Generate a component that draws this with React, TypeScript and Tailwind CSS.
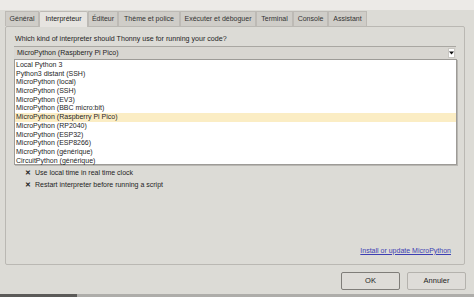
import React from "react";

const tabs = [
  { label: "Général", w: "w-[34px]" },
  { label: "Interpréteur", w: "w-[49px]", active: true },
  { label: "Éditeur", w: "w-[30px]" },
  { label: "Thème et police", w: "w-[62px]" },
  { label: "Exécuter et déboguer", w: "w-[76px]" },
  { label: "Terminal", w: "w-[37px]" },
  { label: "Console", w: "w-[35px]" },
  { label: "Assistant", w: "w-[39px]" },
];

const interpreters = [
  "Local Python 3",
  "Python3 distant (SSH)",
  "MicroPython (local)",
  "MicroPython (SSH)",
  "MicroPython (EV3)",
  "MicroPython (BBC micro:bit)",
  "MicroPython (Raspberry Pi Pico)",
  "MicroPython (RP2040)",
  "MicroPython (ESP32)",
  "MicroPython (ESP8266)",
  "MicroPython (générique)",
  "CircuitPython (générique)",
];

const selected = "MicroPython (Raspberry Pi Pico)";

export default function App() {
  return (
    <div
      className="w-[474px] h-[297px] flex flex-col bg-[#dcdbd6] text-[#1e1e1e] overflow-hidden"
      style={{ fontFamily: '"Liberation Sans", Arial, sans-serif' }}
    >
      {/* top strip of the window */}
      <div className="h-[10px] bg-[#eceae7]" />

      {/* tabs */}
      <div className="flex items-end h-[16px] px-[5px]">
        {tabs.map((t) =>
          t.active ? (
            <div
              key={t.label}
              className={`${t.w} h-[16px] flex items-center justify-center text-[7px] bg-[#e6e4e0] border border-b-0 border-[#bdbab5] rounded-t-[2px] relative top-px`}
            >
              {t.label}
            </div>
          ) : (
            <div
              key={t.label}
              className={`${t.w} h-[15px] flex items-center justify-center text-[7px] text-[#333] bg-[#cfcdc8] border-l border-t border-r border-[#bdbab5]`}
            >
              {t.label}
            </div>
          )
        )}
      </div>

      {/* panel */}
      <div className="ml-[5px] mr-[9px] h-[239px] border border-[#bab8b3] rounded-[2px] bg-[#dcdbd6] flex flex-col px-[8px] pt-[7px]">
        <div className="text-[7.1px] leading-[10px] pl-px">
          Which kind of interpreter should Thonny use for running your code?
        </div>

        {/* combobox */}
        <div className="mt-[2px] h-[13px] flex items-center border-t border-[#a9a7a2] bg-[#d8d6d1] pl-[3px] pr-px">
          <span className="text-[7px] flex-1">MicroPython (Raspberry Pi Pico)</span>
          <div className="w-[7px] h-[10px] bg-white border border-[#c9c7c2] flex items-center justify-center">
            <svg width="5" height="4" viewBox="0 0 5 4">
              <path d="M0 0.5 L5 0.5 L2.5 3.5 Z" fill="#111" />
            </svg>
          </div>
        </div>

        {/* open list */}
        <div className="w-[443px] h-[106px] bg-white border border-[#9d9b97] flex flex-col pt-px shadow-[1px_1px_0_#b9b7b2]">
          {interpreters.map((name) => (
            <div
              key={name}
              className={`h-[8.7px] leading-[8.7px] text-[7px] pl-px ${
                name === selected ? "bg-[#fbedc4]" : ""
              }`}
            >
              {name}
            </div>
          ))}
        </div>

        {/* checkboxes */}
        <div className="mt-[4px] pl-[11px] flex flex-col gap-[3px]">
          <div className="flex items-center gap-[4px] h-[9px] text-[7px]">
            <span className="text-[7px] font-bold">✕</span>
            <span>Use local time in real time clock</span>
          </div>
          <div className="flex items-center gap-[4px] h-[9px] text-[7px]">
            <span className="text-[7px] font-bold">✕</span>
            <span>Restart interpreter before running a script</span>
          </div>
        </div>

        <div className="flex-1" />

        <div className="flex justify-end pr-[5px] pb-[8px]">
          <span className="text-[7px] text-[#3d3fb3] underline">Install or update MicroPython</span>
        </div>
      </div>

      {/* buttons */}
      <div className="flex justify-end gap-[7px] pr-[8px] mt-[7px]">
        <button className="w-[59px] h-[18px] bg-[#dedcd8] border border-[#7f7d79] rounded-[2px] text-[7.5px]">
          OK
        </button>
        <button className="w-[59px] h-[18px] bg-[#dedcd8] border border-[#b4b2ad] rounded-[2px] text-[7.5px]">
          Annuler
        </button>
      </div>

      <div className="flex-1" />
      <div className="h-[3px] flex">
        <div className="w-[77px] bg-[#5b5a58]" />
        <div className="flex-1 bg-[#aeadaa]" />
      </div>
    </div>
  );
}
